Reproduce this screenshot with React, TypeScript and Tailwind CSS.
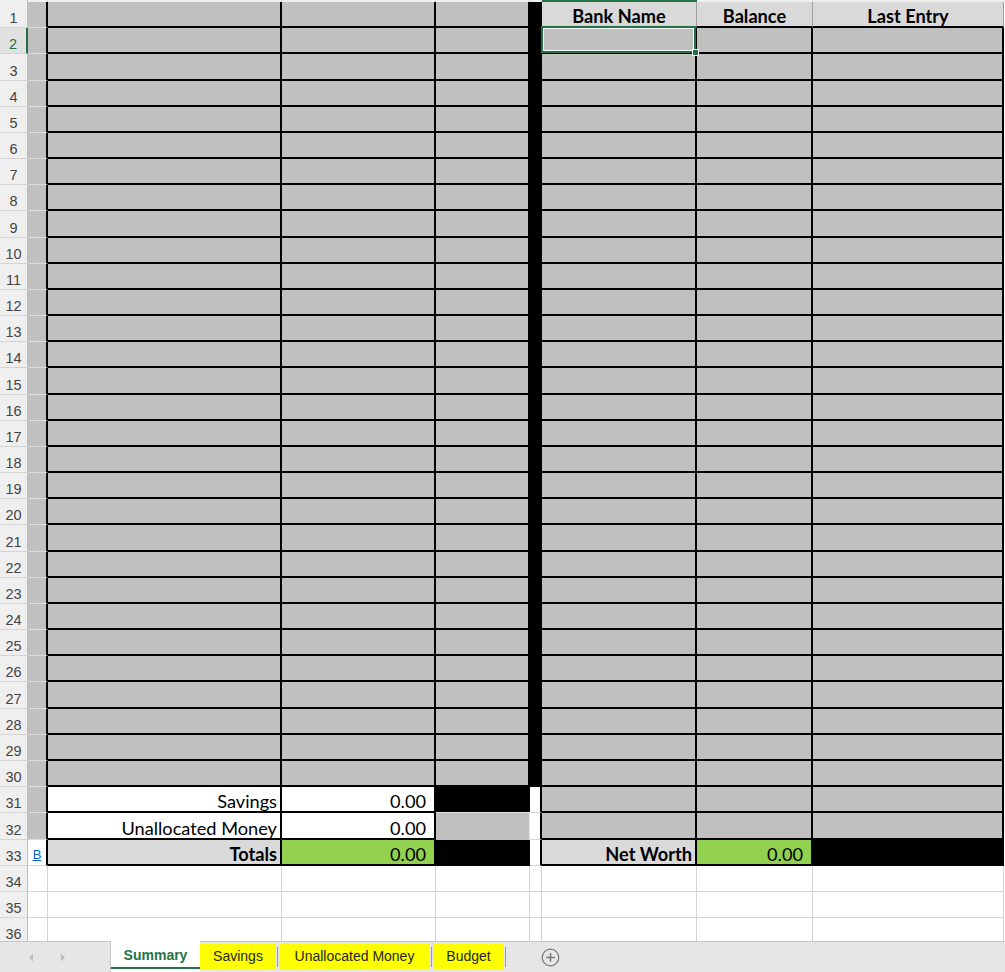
import React from 'react'

// column widths: A..H (row header is 28px)
const W = ['w-[20px]', 'w-[234px]', 'w-[154px]', 'w-[94px]', 'w-[12px]', 'w-[155px]', 'w-[116px]', 'w-[191px]']

const greyA = 'bg-[#c0c0c0] border-r-2 border-r-black border-b border-b-[#dcdcdc]'
const grey = 'bg-[#c0c0c0] border-r-2 border-b-2 border-black'
const head = 'bg-[#d9d9d9] border-r border-r-[#a0a0a0] border-b-2 border-b-black font-bold'
const whiteBox = 'bg-white border-r-2 border-b-2 border-black'
const totalBox = 'bg-[#d9d9d9] border-r-2 border-b-2 border-black font-bold'
const greenBox = 'bg-[#92d050] border-r-2 border-b-2 border-black'
const gridE = 'bg-white border-b border-b-[#d4d4d4] border-r-2 border-r-black'
const plain = 'bg-white border-r border-b border-[#d4d4d4]'

type CellDef = { cls: string; text?: string; align?: string; extra?: React.ReactNode }

function Cell({ w, def }: { w: string; def: CellDef }) {
  return (
    <div className={`${w} shrink-0 h-full relative flex items-end leading-[19px] text-[18.2px] text-black ${def.cls} ${def.align ?? ''}`}>
      {def.text}
      {def.extra}
    </div>
  )
}

function RowHeader({ n, active }: { n: number; active?: boolean }) {
  return (
    <div
      className={`w-[28px] shrink-0 h-full flex items-end justify-center leading-[18px] text-[14.5px] font-['Liberation_Sans',sans-serif] border-b border-b-[#d4d4d4] ${
        active ? 'bg-[#e1e1e1] text-[#217346] border-r-2 border-r-[#217346]' : 'bg-[#efefef] text-[#444] border-r border-r-[#bdbdbd]'
      }`}
    >
      {n}
    </div>
  )
}

const R = 'justify-end pr-[3px]'
const NUM = 'justify-end pr-[8px]'
const MID = 'justify-center'

const selection = (
  <>
    <div className="absolute -top-[2px] -left-[1px] -right-[1px] -bottom-[1px] border-2 border-[#217346] shadow-[inset_0_0_0_1px_#ffffff]" />
    <div className="absolute -right-[4px] -bottom-[4px] w-[7px] h-[7px] bg-[#217346] border border-white" />
  </>
)

function rowCells(n: number): CellDef[] {
  if (n === 1)
    return [
      { cls: greyA },
      { cls: grey },
      { cls: grey },
      { cls: grey },
      { cls: 'bg-black' },
      { cls: head, text: 'Bank Name', align: MID },
      { cls: head, text: 'Balance', align: MID },
      { cls: head, text: 'Last Entry', align: MID },
    ]
  if (n <= 30)
    return [
      { cls: greyA },
      { cls: grey },
      { cls: grey },
      { cls: grey },
      { cls: 'bg-black' },
      n === 2 ? { cls: `${grey} z-10`, extra: selection } : { cls: grey },
      { cls: grey },
      { cls: grey },
    ]
  if (n === 31)
    return [
      { cls: greyA },
      { cls: whiteBox, text: 'Savings', align: R },
      { cls: whiteBox, text: '0.00', align: NUM },
      { cls: 'bg-black border-b border-b-[#e2e2e2]' },
      { cls: gridE },
      { cls: grey },
      { cls: grey },
      { cls: grey },
    ]
  if (n === 32)
    return [
      { cls: greyA },
      { cls: whiteBox, text: 'Unallocated Money', align: R },
      { cls: whiteBox, text: '0.00', align: NUM },
      { cls: 'bg-[#c0c0c0] border-r border-r-[#e2e2e2]' },
      { cls: gridE },
      { cls: grey },
      { cls: grey },
      { cls: grey },
    ]
  if (n === 33)
    return [
      {
        cls: 'bg-white border-r-2 border-r-black border-b border-b-[#d4d4d4] justify-center',
        extra: (
          <span className="mb-[2px] text-[13px] leading-[16px] text-[#0563c1] underline font-['Liberation_Sans',sans-serif]">B</span>
        ),
      },
      { cls: totalBox, text: 'Totals', align: R },
      { cls: greenBox, text: '0.00', align: NUM },
      { cls: 'bg-black' },
      { cls: gridE },
      { cls: totalBox, text: 'Net Worth', align: R },
      { cls: greenBox, text: '0.00', align: NUM },
      { cls: 'bg-black' },
    ]
  return W.map(() => ({ cls: plain }))
}

function Grid() {
  const rows = Array.from({ length: 36 }, (_, i) => i + 1)
  return (
    <div className="flex-1 overflow-hidden">
      {rows.map((n) => (
        <div key={n} className="flex h-[26.18px]">
          <RowHeader n={n} active={n === 2} />
          {rowCells(n).map((def, i) => (
            <Cell key={i} w={W[i]} def={def} />
          ))}
        </div>
      ))}
    </div>
  )
}

function TopStrip() {
  return (
    <div className="flex h-[2px] shrink-0 bg-[#efefef]">
      <div className="w-[28px] border-r border-r-[#bdbdbd]" />
      <div className="w-[20px] border-r border-r-[#d4d4d4]" />
      <div className="w-[234px] border-r border-r-[#d4d4d4]" />
      <div className="w-[154px] border-r border-r-[#d4d4d4]" />
      <div className="w-[94px] border-r border-r-[#d4d4d4]" />
      <div className="w-[12px] border-r border-r-[#d4d4d4]" />
      <div className="w-[155px] bg-[#217346]" />
      <div className="w-[116px] border-r border-r-[#d4d4d4]" />
      <div className="w-[191px]" />
    </div>
  )
}

function Sep() {
  return (
    <div className="w-[3px] flex justify-center items-center">
      <div className="w-px h-[20px] bg-[#9a9a9a]" />
    </div>
  )
}

function TabBar() {
  return (
    <div className="h-[31px] shrink-0 flex bg-[#e6e6e6] border-t border-t-[#c6c6c6] font-['Liberation_Sans',sans-serif] text-[14px]">
      <div className="w-[110px] flex items-center">
        <svg className="ml-[28px]" width="6" height="9" viewBox="0 0 6 9">
          <path d="M5 0.5 L1 4.5 L5 8.5 Z" fill="#bdbdbd" />
        </svg>
        <svg className="ml-[26px]" width="6" height="9" viewBox="0 0 6 9">
          <path d="M1 0.5 L5 4.5 L1 8.5 Z" fill="#bdbdbd" />
        </svg>
      </div>
      <div className="w-[90px] -mt-px bg-white border-l border-l-[#c6c6c6] flex flex-col">
        <div className="flex-1 flex items-center justify-center pt-[3px] font-bold text-[#217346]">Summary</div>
        <div className="h-[2px] mb-[3px] bg-[#217346]" />
      </div>
      <div className="w-[76px] mt-[2px] mb-[3px] bg-[#ffff00] flex items-center justify-center text-[#262626]">Savings</div>
      <Sep />
      <div className="w-[151px] mt-[2px] mb-[3px] bg-[#ffff00] flex items-center justify-center text-[#262626]">Unallocated Money</div>
      <Sep />
      <div className="w-[71px] mt-[2px] mb-[3px] bg-[#ffff00] flex items-center justify-center text-[#262626]">Budget</div>
      <Sep />
      <div className="ml-[34px] flex items-center">
        <svg width="19" height="19" viewBox="0 0 19 19">
          <circle cx="9.5" cy="9.5" r="8.3" fill="none" stroke="#7a7a7a" strokeWidth="1.2" />
          <path d="M9.5 5.2 V13.8 M5.2 9.5 H13.8" stroke="#7a7a7a" strokeWidth="1.6" />
        </svg>
      </div>
    </div>
  )
}

export default function App() {
  return (
    <div className="w-[1005px] h-[972px] overflow-hidden flex flex-col bg-white font-['Lato',sans-serif]">
      <TopStrip />
      <Grid />
      <TabBar />
    </div>
  )
}
